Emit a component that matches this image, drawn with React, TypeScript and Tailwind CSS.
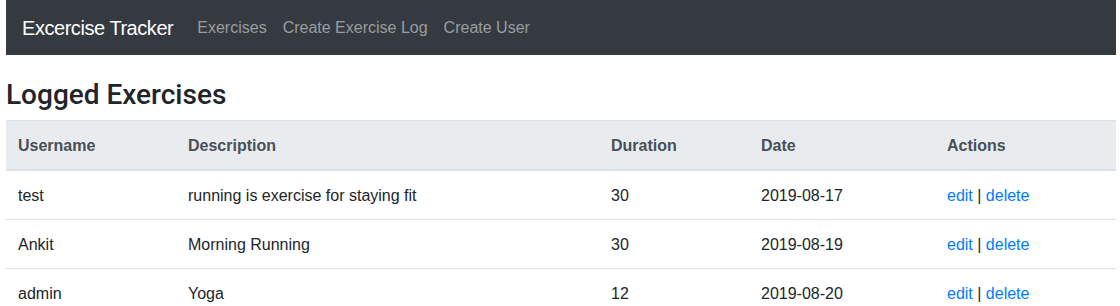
import React from "react";

interface Exercise {
  id: string;
  username: string;
  description: string;
  duration: number;
  date: string;
}

const exercises: Exercise[] = [
  { id: "1", username: "test", description: "running is exercise for staying fit", duration: 30, date: "2019-08-17" },
  { id: "2", username: "Ankit", description: "Morning Running", duration: 30, date: "2019-08-19" },
  { id: "3", username: "admin", description: "Yoga", duration: 12, date: "2019-08-20" },
];

function Navbar() {
  return (
    <nav className="flex h-[55px] items-center bg-[#343a40] px-4">
      <a className="mr-4 text-[20px] leading-[30px] tracking-[-0.45px] text-white">Excercise Tracker</a>
      <ul className="flex">
        <li>
          <a className="px-2 text-base text-[#9a9da0]">Exercises</a>
        </li>
        <li>
          <a className="px-2 text-base text-[#9a9da0]">Create Exercise Log</a>
        </li>
        <li>
          <a className="px-2 text-base text-[#9a9da0]">Create User</a>
        </li>
      </ul>
    </nav>
  );
}

function ExerciseRow({ username, description, duration, date }: Exercise) {
  return (
    <tr className="border-t border-[#dee2e6]">
      <td className="px-3 pt-[13px] pb-[11px]">{username}</td>
      <td className="px-3 pt-[13px] pb-[11px]">{description}</td>
      <td className="px-3 pt-[13px] pb-[11px]">{duration}</td>
      <td className="px-3 pt-[13px] pb-[11px]">{date}</td>
      <td className="px-3 pt-[13px] pb-[11px]">
        <a className="text-[#007bff]">edit</a> | <a className="text-[#007bff]">delete</a>
      </td>
    </tr>
  );
}

export default function App() {
  return (
    <div className="min-h-[306px] bg-white font-['Liberation_Sans',Arial,sans-serif] text-base leading-6 text-[#212529]">
      <div className="ml-[6px] w-[1110px]">
        <Navbar />
        <h3 className="mt-[23px] mb-2 font-['Roboto',sans-serif] text-[28px] leading-[34px] font-medium">
          Logged Exercises
        </h3>
        <table className="w-full border-collapse text-left">
          <colgroup>
            <col className="w-[170px]" />
            <col className="w-[423px]" />
            <col className="w-[150px]" />
            <col className="w-[186px]" />
            <col />
          </colgroup>
          <thead className="bg-[#e9ecef] text-[#495057]">
            <tr className="border-t border-b-2 border-[#dee2e6]">
              <th className="px-3 pt-[13px] pb-[11px] font-bold">Username</th>
              <th className="px-3 pt-[13px] pb-[11px] font-bold">Description</th>
              <th className="px-3 pt-[13px] pb-[11px] font-bold">Duration</th>
              <th className="px-3 pt-[13px] pb-[11px] font-bold">Date</th>
              <th className="px-3 pt-[13px] pb-[11px] font-bold">Actions</th>
            </tr>
          </thead>
          <tbody>
            {exercises.map((exercise) => (
              <ExerciseRow key={exercise.id} {...exercise} />
            ))}
          </tbody>
        </table>
      </div>
    </div>
  );
}
